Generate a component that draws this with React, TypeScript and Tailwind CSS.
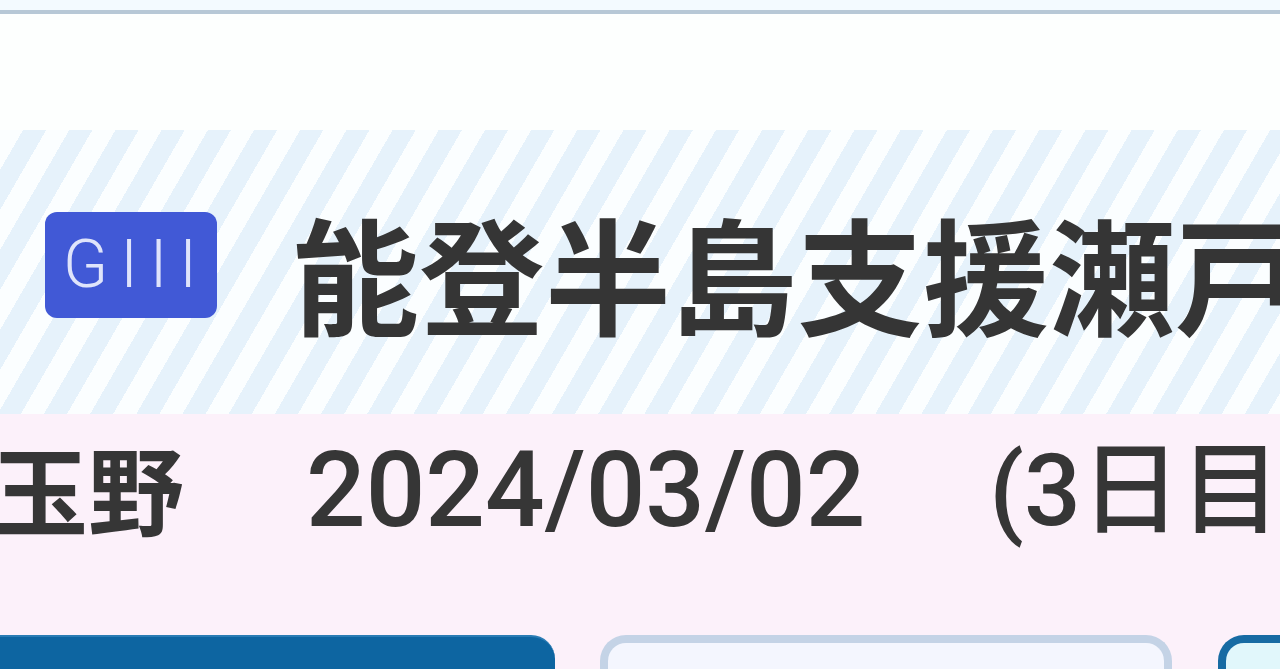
import React from "react";

export default function App() {
  const jp = { fontFamily: '"Noto Sans CJK JP", "Noto Sans", sans-serif' };
  const num = { fontFamily: 'Roboto, "Noto Sans CJK JP", sans-serif' };
  return (
    <div className="w-[1280px] h-[669px] overflow-hidden bg-white flex flex-col">
      <div className="h-[10px] bg-[#f3faff] shrink-0" />
      <div className="h-[4px] bg-[#b7c8d6] shrink-0" />
      <div className="h-[116px] bg-[#fdfffe] shrink-0" />
      <div className="h-[284px] shrink-0 flex items-center bg-[repeating-linear-gradient(120deg,#fbfeff_0px,#fbfeff_20px,#e6f2fb_20px,#e6f2fb_40px)]">
        <div className="ml-[45px] mb-[14px] w-[172px] h-[106px] shrink-0 rounded-[12px] bg-[#4159d6] flex items-center justify-center">
          <span
            className="text-[#dfe4fb] text-[66px] leading-none tracking-[12px] pl-[10px] font-light"
            style={{ fontFamily: 'Roboto, sans-serif' }}
          >
            GIII
          </span>
        </div>
        <div
          className="ml-[76px] mb-[2px] whitespace-nowrap text-[126px] leading-none font-bold text-[#353535]"
          style={jp}
        >
          能登半島支援瀬戸内
        </div>
      </div>
      <div className="flex-1 bg-[#fcf1fa] flex flex-col">
        <div className="h-[221px] pb-[68px] flex items-center whitespace-nowrap text-[#363636]">
          <span className="ml-[-8px] mb-[8px] text-[96px] leading-none font-bold" style={jp}>
            玉野
          </span>
          <span className="ml-[122px] text-[105px] leading-none font-medium" style={num}>
            2024/03/02
          </span>
          <span className="ml-[124px] text-[100px] leading-none font-medium" style={num}>
            (3日目)
          </span>
        </div>
        <div className="flex-1 flex items-stretch">
          <div className="w-[585px] ml-[-30px] rounded-t-[24px] bg-[#0d65a1] shrink-0 border-t-[2px] border-[#2a7cb4]" />
          <div className="ml-[45px] w-[572px] shrink-0 rounded-t-[26px] border-[8px] border-b-0 border-[#c4d3e6] bg-[#f4f6fe]" />
          <div className="ml-[46px] w-[200px] shrink-0 rounded-t-[26px] border-[8px] border-b-0 border-[#176ba3] bg-[#e1f7fb]" />
        </div>
      </div>
    </div>
  );
}
